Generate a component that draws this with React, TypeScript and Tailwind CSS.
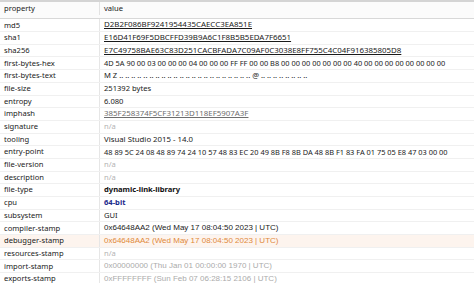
import React from "react";

type Row = { k: string; v: string; cls?: string; bg?: string; mono?: boolean };

const dots = (n: number) => Array.from({ length: n }, () => "..").join(" ");

const rows: Row[] = [
  { k: "md5", v: "D2B2F086BF9241954435CAECC3EA851E", cls: "underline text-[#1a1a1a] text-[7.9px]" },
  { k: "sha1", v: "E16D41F69F5DBCFFD39B9A6C1F8B5B5EDA7F6651", cls: "underline text-[#1a1a1a] text-[7.9px]" },
  { k: "sha256", v: "E7C49758BAE63C83D251CACBFADA7C09AF0C3038E8FF755C4C04F916385805D8", cls: "underline text-[#1a1a1a] text-[7.9px]" },
  { k: "first-bytes-hex", v: "4D 5A 90 00 03 00 00 00 04 00 00 00 FF FF 00 00 B8 00 00 00 00 00 00 00 40 00 00 00 00 00 00 00 00", cls: "text-[7.4px]" },
  { k: "first-bytes-text", v: `M Z ${dots(22)} @ ${dots(8)}` },
  { k: "file-size", v: "251392 bytes" },
  { k: "entropy", v: "6.080" },
  { k: "imphash", v: "385F258374F5CF31213D118EF5907A3F", cls: "underline text-[#6e6e6e] text-[7.9px]" },
  { k: "signature", v: "n/a", cls: "text-[#b4b4b4]" },
  { k: "tooling", v: "Visual Studio 2015 - 14.0", cls: "text-[7.8px]" },
  { k: "entry-point", v: "48 89 5C 24 08 48 89 74 24 10 57 48 83 EC 20 49 8B F8 8B DA 48 8B F1 83 FA 01 75 05 E8 47 03 00 00", cls: "text-[7.4px]" },
  { k: "file-version", v: "n/a", cls: "text-[#b4b4b4]" },
  { k: "description", v: "n/a", cls: "text-[#b4b4b4]" },
  { k: "file-type", v: "dynamic-link-library", cls: "font-bold text-[#111]" },
  { k: "cpu", v: "64-bit", cls: "font-bold text-[#1c2a8c]" },
  { k: "subsystem", v: "GUI" },
  { k: "compiler-stamp", v: "0x64648AA2 (Wed May 17 08:04:50 2023 | UTC)", mono: true, cls: "text-[#1a1a1a]" },
  { k: "debugger-stamp", v: "0x64648AA2 (Wed May 17 08:04:50 2023 | UTC)", mono: true, cls: "text-[#e0893a]", bg: "bg-[#fdf4ee]" },
  { k: "resources-stamp", v: "n/a", cls: "text-[#b4b4b4]" },
  { k: "import-stamp", v: "0x00000000 (Thu Jan 01 00:00:00 1970 | UTC)", mono: true, cls: "text-[#ababab]" },
  { k: "exports-stamp", v: "0xFFFFFFFF (Sun Feb 07 06:28:15 2106 | UTC)", mono: true, cls: "text-[#ababab]" },
];

export default function App() {
  return (
    <div
      className="w-[474px] h-[283px] overflow-hidden bg-white text-[7.6px] text-[#1a1a1a]"
      style={{ fontFamily: '"Noto Sans", "Open Sans", sans-serif' }}
    >
      <div className="h-[2px] bg-[#d4d4d4]" />
      <div className="flex h-[17.4px] items-center border-b border-[#d8d8d8] bg-[#fbfbfb] pb-[3px]">
        <div className="w-[100px] h-full flex items-center pl-[4px] border-r border-[#e2e2e2]">property</div>
        <div className="pl-[4px]">value</div>
      </div>
      {rows.map((r) => (
        <div key={r.k} className={`flex h-[12.7px] items-center border-b border-[#f0f0f0] ${r.bg ?? ""}`}>
          <div className="w-[100px] h-full flex items-center pl-[4px] border-r border-[#e6e6e6] whitespace-nowrap">
            {r.k}
          </div>
          <div
            className={`pl-[4px] whitespace-nowrap ${r.mono ? "text-[8px]" : ""} ${r.cls ?? ""}`}
            style={r.mono ? { fontFamily: '"Liberation Sans", Arial, sans-serif' } : undefined}
          >
            {r.v}
          </div>
        </div>
      ))}
    </div>
  );
}
